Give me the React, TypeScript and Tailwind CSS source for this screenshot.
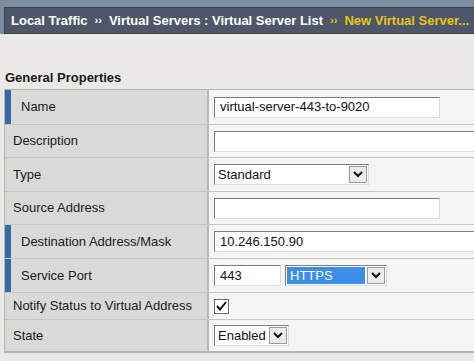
import React from "react"

const Chevron = () => (
  <svg width="10" height="7" viewBox="0 0 10 7" fill="none">
    <path d="M1 1l4 4 4-4" stroke="#111" strokeWidth="2" />
  </svg>
)

const Input = ({ value = "", width }: { value?: string; width: string }) => (
  <div
    className={`${width} flex h-[21px] items-center border border-t-[#7c7c7c] border-r-[#dcdcdc] border-b-[#dcdcdc] border-l-[#7c7c7c] bg-white pl-[5px] text-[13px] text-[#111]`}
  >
    {value}
  </div>
)

const Select = ({
  value,
  width,
  highlight = false,
}: {
  value: string
  width: string
  highlight?: boolean
}) => (
  <div
    className={`${width} flex h-[21px] border border-t-[#7c7c7c] border-r-[#dcdcdc] border-b-[#dcdcdc] border-l-[#7c7c7c] bg-white`}
  >
    <div
      className={`flex flex-1 items-center pl-[3px] text-[13px] ${
        highlight ? "m-[1px] bg-[#3d8ee6] text-white" : "text-[#111]"
      }`}
    >
      {value}
    </div>
    <div className="m-[1px] flex w-[18px] items-center justify-center border border-[#9a9a9a] bg-[#ececec]">
      <Chevron />
    </div>
  </div>
)

type Row = {
  label: string
  required?: boolean
  height: string
  field: React.ReactNode
}

const rows: Row[] = [
  {
    label: "Name",
    required: true,
    height: "h-[34px]",
    field: <Input value="virtual-server-443-to-9020" width="w-[226px]" />,
  },
  { label: "Description", height: "h-[33px]", field: <Input width="w-[270px]" /> },
  {
    label: "Type",
    height: "h-[34px]",
    field: <Select value="Standard" width="w-[155px]" />,
  },
  { label: "Source Address", height: "h-[33px]", field: <Input width="w-[226px]" /> },
  {
    label: "Destination Address/Mask",
    required: true,
    height: "h-[34px]",
    field: <Input value="10.246.150.90" width="w-[270px]" />,
  },
  {
    label: "Service Port",
    required: true,
    height: "h-[34px]",
    field: (
      <div className="flex gap-[4px]">
        <Input value="443" width="w-[67px]" />
        <Select value="HTTPS" width="w-[102px]" highlight />
      </div>
    ),
  },
  {
    label: "Notify Status to Virtual Address",
    height: "h-[27px]",
    field: (
      <div className="flex h-[15px] w-[15px] items-center justify-center border border-[#6d6d6d] bg-white">
        <svg width="11" height="10" viewBox="0 0 11 10" fill="none">
          <path d="M1 5l3 3.5L10 1" stroke="#111" strokeWidth="2" />
        </svg>
      </div>
    ),
  },
  {
    label: "State",
    height: "h-[32px]",
    field: <Select value="Enabled" width="w-[75px]" />,
  },
]

export default function App() {
  return (
    <div className="h-[361px] w-[474px] overflow-hidden bg-[#ebe9e5] font-['Liberation_Sans',Arial,sans-serif]">
      <div className="bg-[#7e8ca0] pt-[7px] pl-[4px]">
        <div className="flex h-[27px] items-center gap-[7px] border border-r-0 border-[#3a414d] bg-[#4e5767] pl-[6px] text-[13px] font-bold whitespace-nowrap text-white">
          <span>Local Traffic</span>
          <span className="text-[11px]">››</span>
          <span>Virtual Servers : Virtual Server List</span>
          <span className="text-[11px] text-[#e6c51a]">››</span>
          <span className="text-[#e6c51a]">New Virtual Server...</span>
        </div>
      </div>

      <h2 className="mt-[36px] pl-[5px] text-[13px] leading-[16px] font-bold text-[#1a1a1a]">
        General Properties
      </h2>

      <div className="mt-[3px] ml-[4px] w-[520px] border-t border-b-2 border-l border-[#b4b4b2]">
        {rows.map((row, i) => (
          <div
            key={i}
            className={`grid grid-cols-[204px_1fr] ${row.height} ${
              i > 0 ? "border-t border-[#c6c6c4]" : ""
            }`}
          >
            <div
              className={`flex items-center border-r-2 border-r-[#b9b9b7] bg-[#d9d9d7] text-[13px] text-[#1a1a1a] ${
                row.required
                  ? "border-l-[6px] border-l-[#3769a3] pl-[10px]"
                  : "pl-[8px]"
              }`}
            >
              {row.label}
            </div>
            <div className="flex items-center bg-[#f5f5f3] pl-[5px]">
              {row.field}
            </div>
          </div>
        ))}
      </div>
    </div>
  )
}
